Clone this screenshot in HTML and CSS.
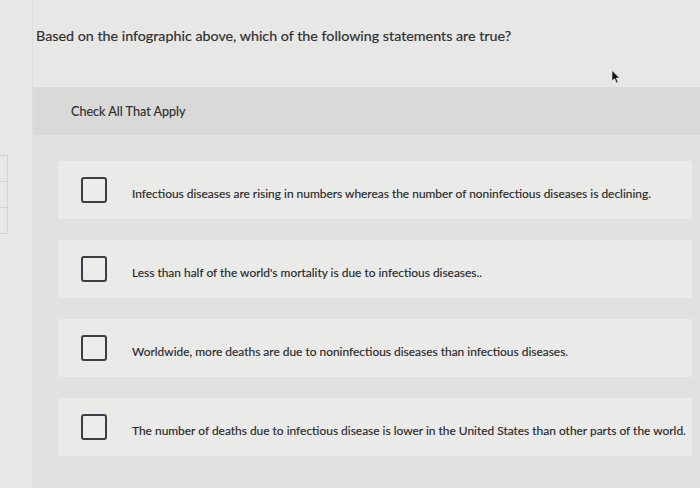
FILE: index.html
```html
<!DOCTYPE html>
<html>
<head>
<meta charset="utf-8">
<link rel="stylesheet" href="styles.css">
</head>
<body>
<div class="page">
  <aside class="rail">
    <div class="rail-tabs">
      <div class="rail-tab"></div>
      <div class="rail-tab"></div>
      <div class="rail-tab"></div>
    </div>
  </aside>
  <main class="main">
    <p class="question">Based on the infographic above, which of the following statements are true?</p>
    <section class="panel">
      <div class="panel-head">Check All That Apply</div>
      <ul class="options">
        <li class="option"><span class="box"></span><span class="label">Infectious diseases are rising in numbers whereas the number of noninfectious diseases is declining.</span></li>
        <li class="option"><span class="box"></span><span class="label">Less than half of the world's mortality is due to infectious diseases..</span></li>
        <li class="option"><span class="box"></span><span class="label">Worldwide, more deaths are due to noninfectious diseases than infectious diseases.</span></li>
        <li class="option"><span class="box"></span><span class="label">The number of deaths due to infectious disease is lower in the United States than other parts of the world.</span></li>
      </ul>
    </section>
  </main>
</div>
<svg class="cursor" width="9" height="14" viewBox="0 0 9 14"><path d="M1 0.5 L1 11 L3.6 8.6 L5.4 13 L7 12.3 L5.2 8 L8.5 8 Z" fill="#111" stroke="#eee" stroke-width="0.6"/></svg>
</body>
</html>
```
FILE: styles.css
```css
html, body {
  margin: 0;
  padding: 0;
}
body {
  width: 700px;
  height: 488px;
  overflow: hidden;
  background: #e7e7e5;
  font-family: Lato, "Open Sans", Arial, sans-serif;
  color: #2d2d2f;
  position: relative;
}
.page {
  display: flex;
  height: 488px;
}
.rail {
  width: 32px;
  flex: none;
  padding-top: 155px;
  box-sizing: border-box;
}
.rail-tabs {
  width: 7px;
  border: 1px solid #d2d2d0;
  border-left: none;
  display: flex;
  flex-direction: column;
}
.rail-tab {
  height: 25px;
  border-bottom: 1px solid #d2d2d0;
}
.rail-tab:last-child {
  border-bottom: none;
}
.main {
  flex: 1;
  display: flex;
  flex-direction: column;
  border-left: 1px solid #dededc;
}
.question {
  margin: 0;
  padding: 26px 0 0 3px;
  height: 61px;
  font-size: 14.3px;
  line-height: 20px;
  color: #303032;
  -webkit-text-stroke: 0.2px #303032;
}
.panel {
  background: #e1e1df;
  height: 401px;
}
.panel-head {
  background: #d9d9d7;
  height: 48px;
  display: flex;
  align-items: center;
  padding-left: 38px;
  font-size: 12.6px;
  color: #2e2e30;
  -webkit-text-stroke: 0.15px #2e2e30;
}
.options {
  list-style: none;
  margin: 0;
  padding: 26px 8px 0 25px;
  display: flex;
  flex-direction: column;
  gap: 21px;
}
.option {
  height: 58px;
  background: #eaeae8;
  display: flex;
  align-items: center;
  padding-left: 23px;
  gap: 25px;
}
.box {
  width: 22px;
  height: 22px;
  border: 2px solid #3b3e47;
  border-radius: 3px;
  flex: none;
  background: #ececea;
}
.label {
  font-size: 11.95px;
  margin-top: 6px;
  color: #28282a;
  white-space: nowrap;
  -webkit-text-stroke: 0.15px #28282a;
}
.cursor {
  position: absolute;
  left: 611px;
  top: 70px;
}
```
